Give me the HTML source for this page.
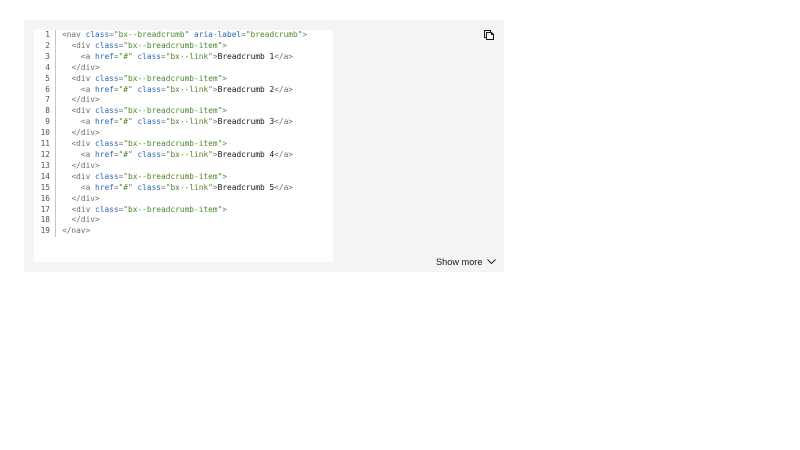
<!DOCTYPE html>
<html><head><meta charset="utf-8"><style>
body{margin:0;background:#fff;width:800px;height:450px;overflow:hidden;font-family:"Liberation Sans",sans-serif}
.wrap{position:absolute;left:24px;top:20px;width:480px;height:252px;background:#f4f4f4}
.code{position:absolute;left:10px;top:10px;width:299px;height:232px;background:#fff}
pre{margin:0;font-family:"DejaVu Sans Mono","Liberation Mono",monospace;font-size:7.83px;line-height:10.9px;color:#161616;position:absolute;left:28px;top:0}
.nums{position:absolute;left:0;top:0;width:16px;text-align:right;font-family:"DejaVu Sans Mono",monospace;font-size:7.8px;line-height:10.9px;color:#525252}
.bar{position:absolute;left:21px;top:0;width:1px;height:207px;background:#c6c6c6}
.t{color:#6f6f6f}.a{color:#2f66b8}.v{color:#4a8a2c}
.show{position:absolute;left:412px;top:237px;font-size:9.2px;color:#161616;white-space:nowrap}
.copy{position:absolute;left:459px;top:9px}
</style></head><body>
<div class="wrap">
<div class="code">
<div class="nums">1<br>2<br>3<br>4<br>5<br>6<br>7<br>8<br>9<br>10<br>11<br>12<br>13<br>14<br>15<br>16<br>17<br>18<br>19</div>
<div class="bar"></div>
<pre><span class="t">&lt;nav</span> <span class="a">class</span><span class="t">=</span><span class="v">"bx--breadcrumb"</span> <span class="a">aria-label</span><span class="t">=</span><span class="v">"breadcrumb"</span><span class="t">&gt;</span>
  <span class="t">&lt;div</span> <span class="a">class</span><span class="t">=</span><span class="v">"bx--breadcrumb-item"</span><span class="t">&gt;</span>
    <span class="t">&lt;a</span> <span class="a">href</span><span class="t">=</span><span class="v">"#"</span> <span class="a">class</span><span class="t">=</span><span class="v">"bx--link"</span><span class="t">&gt;</span>Breadcrumb 1<span class="t">&lt;/a&gt;</span>
  <span class="t">&lt;/div&gt;</span>
  <span class="t">&lt;div</span> <span class="a">class</span><span class="t">=</span><span class="v">"bx--breadcrumb-item"</span><span class="t">&gt;</span>
    <span class="t">&lt;a</span> <span class="a">href</span><span class="t">=</span><span class="v">"#"</span> <span class="a">class</span><span class="t">=</span><span class="v">"bx--link"</span><span class="t">&gt;</span>Breadcrumb 2<span class="t">&lt;/a&gt;</span>
  <span class="t">&lt;/div&gt;</span>
  <span class="t">&lt;div</span> <span class="a">class</span><span class="t">=</span><span class="v">"bx--breadcrumb-item"</span><span class="t">&gt;</span>
    <span class="t">&lt;a</span> <span class="a">href</span><span class="t">=</span><span class="v">"#"</span> <span class="a">class</span><span class="t">=</span><span class="v">"bx--link"</span><span class="t">&gt;</span>Breadcrumb 3<span class="t">&lt;/a&gt;</span>
  <span class="t">&lt;/div&gt;</span>
  <span class="t">&lt;div</span> <span class="a">class</span><span class="t">=</span><span class="v">"bx--breadcrumb-item"</span><span class="t">&gt;</span>
    <span class="t">&lt;a</span> <span class="a">href</span><span class="t">=</span><span class="v">"#"</span> <span class="a">class</span><span class="t">=</span><span class="v">"bx--link"</span><span class="t">&gt;</span>Breadcrumb 4<span class="t">&lt;/a&gt;</span>
  <span class="t">&lt;/div&gt;</span>
  <span class="t">&lt;div</span> <span class="a">class</span><span class="t">=</span><span class="v">"bx--breadcrumb-item"</span><span class="t">&gt;</span>
    <span class="t">&lt;a</span> <span class="a">href</span><span class="t">=</span><span class="v">"#"</span> <span class="a">class</span><span class="t">=</span><span class="v">"bx--link"</span><span class="t">&gt;</span>Breadcrumb 5<span class="t">&lt;/a&gt;</span>
  <span class="t">&lt;/div&gt;</span>
  <span class="t">&lt;div</span> <span class="a">class</span><span class="t">=</span><span class="v">"bx--breadcrumb-item"</span><span class="t">&gt;</span>
  <span class="t">&lt;/div&gt;</span>
<span class="t">&lt;/nav&gt;</span></pre>
</div>
<svg class="copy" width="12" height="12" viewBox="0 0 12 12" fill="none" stroke="#161616" stroke-width="1">
<path d="M3.5 8.5H1.5V1.5H7.5V3.5"/><path d="M3.5 3.5H8.5L10.5 5.5V10.5H3.5Z"/><path d="M8.5 3.5V5.5H10.5"/>
</svg>
<div class="show">Show more<svg width="9" height="7" viewBox="0 0 9 7" style="margin-left:5px"><path d="M0.5 1.5L4.5 5.5L8.5 1.5" fill="none" stroke="#161616" stroke-width="0.9"/></svg></div>
</div>
</body></html>
